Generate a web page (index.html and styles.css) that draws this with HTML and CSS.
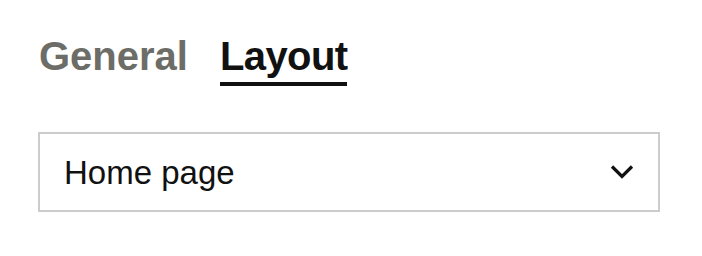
FILE: index.html
```html
<!DOCTYPE html>
<html lang="en">
<head>
    <meta charset="UTF-8">
    <meta name="viewport" content="width=device-width, initial-scale=1.0">
    <title>Settings</title>
    <link rel="stylesheet" href="styles.css">
</head>
<body>
    <div class="panel">
        <div class="tabs">
            <a class="tab" href="#">General</a>
            <a class="tab active" href="#">Layout</a>
        </div>
        <div class="select">
            <span class="select-value">Home page</span>
            <svg class="chevron" width="24" height="16" viewBox="0 0 24 16">
                <polyline points="2,2.5 12,12.5 22,2.5" fill="none" stroke="#111" stroke-width="3.2"/>
            </svg>
        </div>
    </div>
</body>
</html>
```

FILE: styles.css
```css
body {
    margin: 0;
    padding: 0;
    background-color: #fff;
    font-family: "Liberation Sans", Arial, sans-serif;
    color: #111;
}
.panel {
    padding: 36px 0 0 38px;
    width: 622px;
}
.tabs {
    display: flex;
    gap: 32px;
    padding-left: 1px;
}
.tab {
    font-size: 40px;
    font-weight: bold;
    line-height: 40px;
    color: #6d6d68;
    text-decoration: none;
    padding-bottom: 6px;
    border-bottom: 4px solid transparent;
}
.tab.active {
    color: #111;
    letter-spacing: -0.6px;
    border-bottom-color: #111;
}
.select {
    margin-top: 46px;
    height: 76px;
    border: 2px solid #ccc;
    display: flex;
    align-items: center;
    justify-content: space-between;
    padding: 0 24px;
}
.select-value {
    font-size: 33px;
    line-height: 33px;
}
.chevron {
    display: block;
}
```
